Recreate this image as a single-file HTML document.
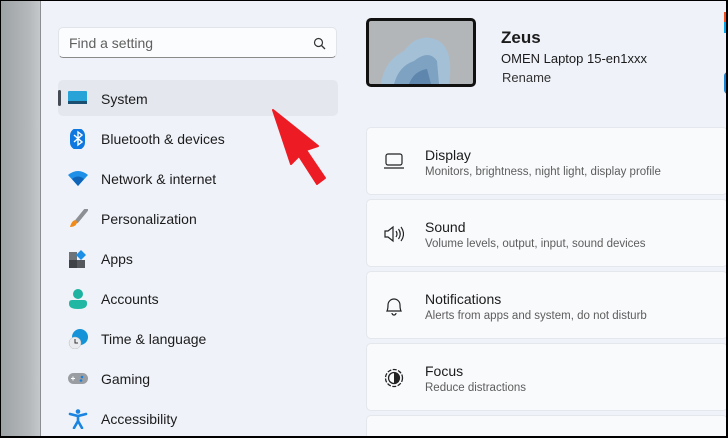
<!DOCTYPE html>
<html><head><style>
*{margin:0;padding:0;box-sizing:border-box}
body{width:728px;height:438px;overflow:hidden;background:#000;font-family:"Liberation Sans",sans-serif;position:relative}
#win{position:absolute;left:1px;top:1px;width:725px;height:435px;background:#eff3f9;overflow:hidden}
#strip{position:absolute;left:0;top:0;width:40px;height:435px;background:linear-gradient(90deg,#9ea3a6,#b4b8bb 70%,#c6cacd)}
#strip:after{content:"";position:absolute;right:0;top:0;width:1px;height:100%;background:#8b8f92}
.search{position:absolute;left:57px;top:26px;width:279px;height:31px;background:#fbfcfd;border:1px solid #e1e4e8;border-bottom:1px solid #8a8a8a;border-radius:5px;font-size:14px;color:#5f5f5f;padding:7px 0 0 10px}
.nav{position:absolute;left:57px;width:280px;height:36px;font-size:14px;color:#1b1b1b}
.nav span{position:absolute;left:43px;top:11px}
.nav .ic{position:absolute;left:10px;top:9px;width:20px;height:20px}
.sel{background:#e4e8ee;border-radius:5px}
.bar{position:absolute;left:0;top:10px;width:3px;height:16px;background:#454c55;border-radius:2px}
.card{position:absolute;left:365px;width:362px;height:68px;background:#f9fafc;border:1px solid #e4e7eb;border-radius:5px}
.card .t{position:absolute;left:58px;top:19px;font-size:14px;color:#1b1b1b}
.card .s{position:absolute;left:58px;top:38px;font-size:11.5px;color:#5d5d5d}
.card svg{position:absolute;left:17px;top:24px}
</style></head><body><div id="win">
<div id="strip"></div>
<div class="search">Find a setting
<svg style="position:absolute;right:10px;top:9px" width="13" height="13" viewBox="0 0 13 13"><circle cx="5.5" cy="5.5" r="4" fill="none" stroke="#333" stroke-width="1.2"/><path d="M8.5 8.5L12 12" stroke="#333" stroke-width="1.3"/></svg></div>

<div class="nav sel" style="top:79px"><div class="bar"></div><svg class="ic" viewBox="0 0 20 20"><rect x="0" y="2" width="19" height="13" rx="1" fill="#28a3d8"/><rect x="0" y="12" width="19" height="3" fill="#1a4f72"/></svg><span>System</span></div>
<div class="nav" style="top:119px"><svg class="ic" viewBox="0 0 20 20"><rect x="2" y="-1" width="15" height="22" rx="7.5" fill="#0f78e0"/><path d="M6 6l8 7-4 3V3l4 3-8 7" fill="none" stroke="#fff" stroke-width="1.4"/></svg><span>Bluetooth &amp; devices</span></div>
<div class="nav" style="top:159px"><svg class="ic" viewBox="0 0 20 20"><path d="M0 6Q10-2 20 6L10 17Z" fill="#1e90e8"/><path d="M4 10Q10 5 16 10L10 17Z" fill="#1064b8"/></svg><span>Network &amp; internet</span></div>
<div class="nav" style="top:199px"><svg class="ic" viewBox="0 0 20 20"><path d="M18 1L9 12" stroke="#8c8f94" stroke-width="4" stroke-linecap="round"/><path d="M8 11c-3 0-5 3-6 7 4 0 7-2 7-5z" fill="#f08a18"/></svg><span>Personalization</span></div>
<div class="nav" style="top:239px"><svg class="ic" viewBox="0 0 20 20"><rect x="1" y="3" width="8" height="8" fill="#6e7378"/><rect x="1" y="11" width="8" height="8" fill="#3e4246"/><rect x="9" y="11" width="8" height="8" fill="#55595d"/><path d="M13 1l5 5-5 5-5-5z" fill="#1b8fe6"/></svg><span>Apps</span></div>
<div class="nav" style="top:279px"><svg class="ic" viewBox="0 0 20 20"><circle cx="10" cy="5" r="5" fill="#1db3a0"/><path d="M1 14q0-3 3-3h12q3 0 3 3v1q0 5-9 5T1 15z" fill="#20b8a3"/></svg><span>Accounts</span></div>
<div class="nav" style="top:319px"><svg class="ic" viewBox="0 0 20 20"><circle cx="12" cy="8" r="8" fill="#1593d8"/><circle cx="7" cy="14" r="6" fill="#e9ebee" stroke="#bbb" stroke-width=".5"/><path d="M7 10v4h3" stroke="#333" fill="none"/></svg><span>Time &amp; language</span></div>
<div class="nav" style="top:359px"><svg class="ic" viewBox="0 0 20 20"><rect x="0" y="4" width="20" height="11" rx="5.5" fill="#9a9ea3"/><path d="M3 9.5h4M5 7.5v4" stroke="#fff"/><circle cx="14" cy="8" r="1.3" fill="#1a7fd8"/><circle cx="13" cy="11.5" r="1.3" fill="#1a7fd8"/></svg><span>Gaming</span></div>
<div class="nav" style="top:399px"><svg class="ic" viewBox="0 0 20 20"><circle cx="10" cy="2.5" r="2.3" fill="#1a84e0"/><path d="M2 5l8 2 8-2M10 7v5M10 12l-4 7M10 12l4 7" stroke="#1a84e0" stroke-width="2.6" fill="none" stroke-linecap="round"/></svg><span>Accessibility</span></div>

<svg style="position:absolute;left:0;top:0" width="725" height="435"><path d="M272 109L317 145L305 149L324 177L316 183L298 155L290 163Z" fill="#ed1c24" stroke="#ed1c24" stroke-width="2" stroke-linejoin="round"/></svg>

<div style="position:absolute;left:365px;top:17px;width:110px;height:69px;background:#111;border-radius:5px;padding:3px">
<svg width="104" height="63" viewBox="0 0 104 63" style="display:block;border-radius:2px"><rect width="104" height="63" fill="#b3b6b9"/><path d="M12 63Q15 40 35 30Q50 10 70 20Q85 30 80 63Z" fill="#a4c0d6"/><path d="M25 63Q30 45 45 40Q60 28 68 40L70 63Z" fill="#7ea2c2"/><path d="M40 63Q45 50 58 48L62 63Z" fill="#5f86ac"/></svg></div>
<div style="position:absolute;left:500px;top:27px;font-size:17px;font-weight:bold;color:#1b1b1b">Zeus</div>
<div style="position:absolute;left:500px;top:50px;font-size:13px;color:#1b1b1b">OMEN Laptop 15-en1xxx</div>
<div style="position:absolute;left:501px;top:69px;font-size:13px;color:#333">Rename</div>
<div style="position:absolute;left:723px;top:11px;width:2px;height:10px;background:#f25022"></div>
<div style="position:absolute;left:723px;top:21px;width:2px;height:11px;background:#05a6f0"></div>
<div style="position:absolute;left:723px;top:71px;width:4px;height:22px;border-radius:4px 0 0 4px;background:#1883d7"></div>

<div class="card" style="top:126px"><svg width="20" height="20" viewBox="0 0 20 20"><rect x="2" y="2" width="16" height="11" rx="2" fill="none" stroke="#222" stroke-width="1.2"/><path d="M0 16h20" stroke="#222" stroke-width="1.2"/></svg><div class="t">Display</div><div class="s">Monitors, brightness, night light, display profile</div></div>
<div class="card" style="top:198px"><svg width="20" height="20" viewBox="0 0 20 20"><path d="M1 7h3l5-4v14l-5-4H1z" fill="none" stroke="#222" stroke-width="1.2"/><path d="M12 7q2 3 0 6M14.5 5q3.5 5 0 10M17 3q5 7 0 14" fill="none" stroke="#222" stroke-width="1.2"/></svg><div class="t">Sound</div><div class="s">Volume levels, output, input, sound devices</div></div>
<div class="card" style="top:270px"><svg width="20" height="20" viewBox="0 0 20 20"><path d="M3 15q1-2 1-6a6 6 0 0 1 12 0q0 4 1 6z" fill="none" stroke="#222" stroke-width="1.2"/><path d="M8 17a2 2 0 0 0 4 0" fill="none" stroke="#222" stroke-width="1.2"/></svg><div class="t">Notifications</div><div class="s">Alerts from apps and system, do not disturb</div></div>
<div class="card" style="top:342px"><svg width="20" height="20" viewBox="0 0 20 20"><circle cx="10" cy="10" r="8.5" fill="none" stroke="#222" stroke-width="1.3" stroke-dasharray="4 1.5"/><circle cx="10" cy="10" r="5.5" fill="none" stroke="#222" stroke-width="1.3"/><path d="M10 4.5a5.5 5.5 0 0 1 0 11z" fill="#222"/></svg><div class="t">Focus</div><div class="s">Reduce distractions</div></div>
<div class="card" style="top:414px;height:21px;border-bottom:none;border-radius:5px 5px 0 0"></div>
</div></body></html>
